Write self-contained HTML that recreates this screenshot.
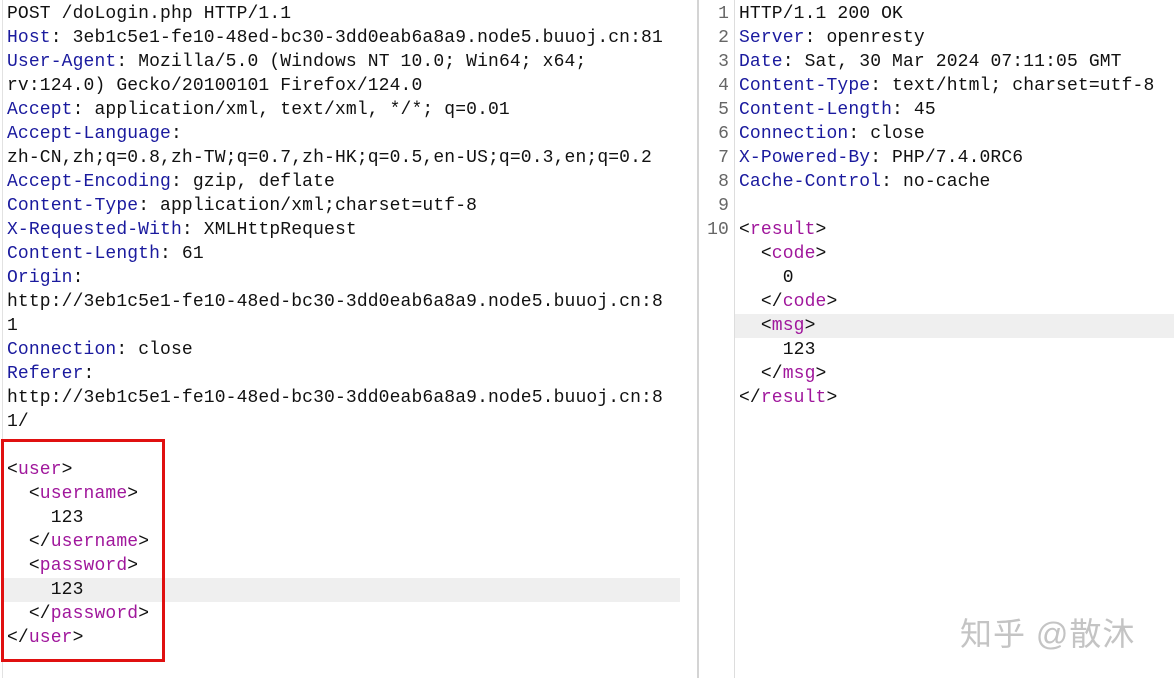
<!DOCTYPE html>
<html><head><meta charset="utf-8"><style>
body{margin:0;width:1174px;height:678px;background:#fff;overflow:hidden;position:relative;font-family:"Liberation Mono",monospace;font-size:18px;}
pre{margin:0;font:inherit;line-height:24px;position:absolute;color:#111;white-space:pre;letter-spacing:0.13px}
.k{color:#1a1a9e}.t{color:#a0179c}
.hl{position:absolute;background:#efefef;height:24px}
</style></head><body>
<div class="hl" style="left:3px;top:578px;width:677px"></div>
<div class="hl" style="left:735px;top:314px;width:439px"></div>
<div style="position:absolute;left:697px;top:0;width:2px;height:678px;background:#d4d4d4"></div>
<div style="position:absolute;left:734px;top:0;width:1px;height:678px;background:#ddd"></div>
<div style="position:absolute;left:2px;top:0;width:1px;height:678px;background:#e2e2e2"></div>
<pre style="left:7px;top:2px">POST /doLogin.php HTTP/1.1
<span class="k">Host</span>: 3eb1c5e1-fe10-48ed-bc30-3dd0eab6a8a9.node5.buuoj.cn:81
<span class="k">User-Agent</span>: Mozilla/5.0 (Windows NT 10.0; Win64; x64;
rv:124.0) Gecko/20100101 Firefox/124.0
<span class="k">Accept</span>: application/xml, text/xml, */*; q=0.01
<span class="k">Accept-Language</span>:
zh-CN,zh;q=0.8,zh-TW;q=0.7,zh-HK;q=0.5,en-US;q=0.3,en;q=0.2
<span class="k">Accept-Encoding</span>: gzip, deflate
<span class="k">Content-Type</span>: application/xml;charset=utf-8
<span class="k">X-Requested-With</span>: XMLHttpRequest
<span class="k">Content-Length</span>: 61
<span class="k">Origin</span>:
http://3eb1c5e1-fe10-48ed-bc30-3dd0eab6a8a9.node5.buuoj.cn:8
1
<span class="k">Connection</span>: close
<span class="k">Referer</span>:
http://3eb1c5e1-fe10-48ed-bc30-3dd0eab6a8a9.node5.buuoj.cn:8
1/

&lt;<span class="t">user</span>&gt;
  &lt;<span class="t">username</span>&gt;
    123
  &lt;/<span class="t">username</span>&gt;
  &lt;<span class="t">password</span>&gt;
    123
  &lt;/<span class="t">password</span>&gt;
&lt;/<span class="t">user</span>&gt;</pre>
<div style="position:absolute;left:1px;top:439px;width:158px;height:217px;border:3px solid #e01010"></div>
<pre style="left:700px;top:2px;width:29px;text-align:right;color:#666">1
2
3
4
5
6
7
8
9
10</pre>
<pre style="left:739px;top:2px">HTTP/1.1 200 OK
<span class="k">Server</span>: openresty
<span class="k">Date</span>: Sat, 30 Mar 2024 07:11:05 GMT
<span class="k">Content-Type</span>: text/html; charset=utf-8
<span class="k">Content-Length</span>: 45
<span class="k">Connection</span>: close
<span class="k">X-Powered-By</span>: PHP/7.4.0RC6
<span class="k">Cache-Control</span>: no-cache

&lt;<span class="t">result</span>&gt;
  &lt;<span class="t">code</span>&gt;
    0
  &lt;/<span class="t">code</span>&gt;
  &lt;<span class="t">msg</span>&gt;
    123
  &lt;/<span class="t">msg</span>&gt;
&lt;/<span class="t">result</span>&gt;</pre>
<div style="position:absolute;left:960px;top:609px;font-family:'Liberation Sans','Noto Sans CJK SC',sans-serif;font-size:32px;letter-spacing:1px;color:#c4c4c4;white-space:nowrap">知乎 @散沐</div>
</body></html>
